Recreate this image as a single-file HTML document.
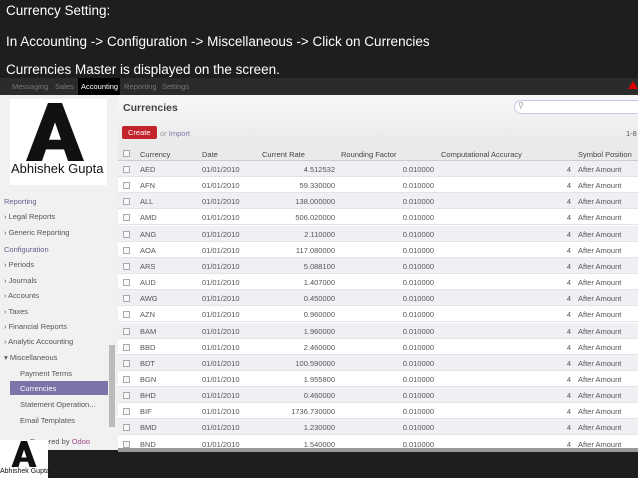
<!DOCTYPE html>
<html><head><meta charset="utf-8"><style>
*{margin:0;padding:0;box-sizing:border-box}
body{width:638px;height:478px;overflow:hidden;background:#1f1e1e;font-family:"Liberation Sans",sans-serif;position:relative}
.a{position:absolute;white-space:nowrap}
.top{left:6px;color:#fff;font-size:13.5px}
.nav{left:0;top:78px;width:638px;height:17px;background:#2b2b2b}
.nav span{position:absolute;top:4px;font-size:7.5px;color:#777}
.side{left:0;top:95px;width:118px;height:355px;background:#f1f1f1}
.side .a{font-size:7.5px;color:#555}
.main{left:118px;top:95px;width:520px;height:355px;background:#fff}
.hdr{left:118px;top:95px;width:520px;height:52px;background:linear-gradient(#f7f7f7,#e9e9e9)}
.th{top:147px;left:118px;width:520px;height:14px;background:#eaeaea;border-bottom:1px solid #ccc}
.t{font-size:7.5px;color:#555}
.h{font-size:7.5px;color:#444}
.cb{width:7px;height:7px;border:1px solid #aaa;background:#f8f8f8}
</style></head><body>
<div class="a top" style="top:3px">Currency Setting:</div>
<div class="a top" style="top:34px">In Accounting -&gt; Configuration -&gt; Miscellaneous -&gt; Click on Currencies</div>
<div class="a top" style="top:62px">Currencies Master is displayed on the screen.</div>
<div class="a nav">
<span style="left:12px">Messaging</span><span style="left:55px">Sales</span>
<span style="left:78px;top:0;height:17px;width:42px;background:#000;color:#fff;padding:4px 3px">Accounting</span>
<span style="left:124px">Reporting</span><span style="left:162px">Settings</span>
<span style="left:628px;top:3px;width:0;height:0;border-left:5px solid transparent;border-right:5px solid transparent;border-bottom:8px solid #d00"></span>
</div>
<div class="a side">
<div class="a" style="left:10px;top:4px;width:97px;height:86px;background:#fff"></div>
<svg class="a" style="left:26px;top:8px" width="58" height="58" viewBox="0 0 58 60" preserveAspectRatio="none"><path d="M22 0 L36 0 L58 60 L42 60 L38 48 L20 48 L16 60 L0 60 Z M23 38 L35 38 L29 20 Z" fill="#111"/></svg>
<div class="a" style="left:11px;top:66px;font-size:13px;color:#111">Abhishek Gupta</div>
<div class="a" style="left:4px;top:102px;color:#6a5a8c">Reporting</div>
<div class="a" style="left:4px;top:117px">› Legal Reports</div>
<div class="a" style="left:4px;top:133px">› Generic Reporting</div>
<div class="a" style="left:4px;top:150px;color:#6a5a8c">Configuration</div>
<div class="a" style="left:4px;top:165px">› Periods</div>
<div class="a" style="left:4px;top:181px">› Journals</div>
<div class="a" style="left:4px;top:196px">› Accounts</div>
<div class="a" style="left:4px;top:212px">› Taxes</div>
<div class="a" style="left:4px;top:227px">› Financial Reports</div>
<div class="a" style="left:4px;top:242px">› Analytic Accounting</div>
<div class="a" style="left:4px;top:258px">▾ Miscellaneous</div>
<div class="a" style="left:20px;top:274px">Payment Terms</div>
<div class="a" style="left:10px;top:286px;width:98px;height:14px;background:#7a74a8"></div>
<div class="a" style="left:20px;top:289px;color:#fff">Currencies</div>
<div class="a" style="left:20px;top:305px">Statement Operation...</div>
<div class="a" style="left:20px;top:321px">Email Templates</div>
<div class="a" style="left:30px;top:342px">Powered by <span style="color:#a24689">Odoo</span></div>
<div class="a" style="left:109px;top:250px;width:6px;height:82px;background:#bbb"></div>
</div>
<div class="a main"></div>
<div class="a hdr"></div>
<div class="a" style="left:123px;top:102px;font-size:10.5px;font-weight:bold;color:#444">Currencies</div>
<div class="a" style="left:514px;top:100px;width:130px;height:14px;border:1px solid #c8c8e8;border-radius:7px;background:#fff"></div>
<div class="a" style="left:518px;top:101px;font-size:8px;color:#999">⚲</div>
<div class="a" style="left:122px;top:126px;width:35px;height:13px;background:#c3232a;border-radius:2px;color:#fff;font-size:7.5px;padding:2px 6px">Create</div>
<div class="a" style="left:160px;top:129px;font-size:7.5px;color:#999">or <span style="color:#7c7bad">Import</span></div>
<div class="a" style="left:626px;top:129px;font-size:7.5px;color:#555">1-8</div>
<div class="a th"></div>
<div class="a cb" style="left:123px;top:150px"></div>
<div class="a h" style="left:140px;top:150px">Currency</div>
<div class="a h" style="left:202px;top:150px">Date</div>
<div class="a h" style="left:262px;top:150px">Current Rate</div>
<div class="a h" style="left:341px;top:150px">Rounding Factor</div>
<div class="a h" style="left:441px;top:150px">Computational Accuracy</div>
<div class="a h" style="left:578px;top:150px">Symbol Position</div>
<div id="rows"></div>
<script>
var d=[["AED","4.512532"],["AFN","59.330000"],["ALL","138.000000"],["AMD","506.020000"],["ANG","2.110000"],["AOA","117.080000"],["ARS","5.088100"],["AUD","1.407000"],["AWG","0.450000"],["AZN","0.960000"],["BAM","1.960000"],["BBD","2.460000"],["BDT","100.590000"],["BGN","1.955800"],["BHD","0.460000"],["BIF","1736.730000"],["BMD","1.230000"],["BND","1.540000"]];
var h="";d.forEach(function(r,i){var y=161+i*16.15;
h+='<div class="a" style="left:118px;top:'+y+'px;width:520px;height:16px;background:'+(i%2?'#fff':'#eef0f4')+';border-bottom:1px solid #e4e4e4"></div>';
var ty=y+4;
h+='<div class="a cb" style="left:123px;top:'+(ty+1)+'px"></div>';
h+='<div class="a t" style="left:140px;top:'+ty+'px">'+r[0]+'</div>';
h+='<div class="a t" style="left:202px;top:'+ty+'px">01/01/2010</div>';
h+='<div class="a t" style="right:303px;top:'+ty+'px">'+r[1]+'</div>';
h+='<div class="a t" style="right:204px;top:'+ty+'px">0.010000</div>';
h+='<div class="a t" style="right:67px;top:'+ty+'px">4</div>';
h+='<div class="a t" style="left:578px;top:'+ty+'px">After Amount</div>';});
document.getElementById("rows").innerHTML=h;
</script>
<div class="a" style="left:0;top:450px;width:638px;height:28px;background:#1f1e1e"></div>
<div class="a" style="left:118px;top:448px;width:520px;height:4px;background:#999"></div>
<div class="a" style="left:0;top:440px;width:48px;height:38px;background:#fff"></div>
<svg class="a" style="left:11px;top:441px" width="26" height="26" viewBox="0 0 58 60"><path d="M22 0 L36 0 L58 60 L42 60 L38 48 L20 48 L16 60 L0 60 Z M23 38 L35 38 L29 20 Z" fill="#111"/></svg>
<div class="a" style="left:0;top:468px;font-size:7px;color:#111">Abhishek Gupta</div>
</body></html>
